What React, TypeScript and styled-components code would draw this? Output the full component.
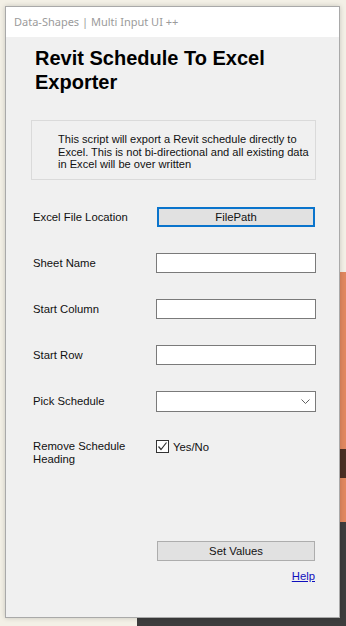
import React from 'react';
import styled, { createGlobalStyle } from 'styled-components';

const Global = createGlobalStyle`
  html, body {
    margin: 0;
    padding: 0;
  }
  body {
    width: 346px;
    height: 626px;
    overflow: hidden;
    font-family: "Liberation Sans", Arial, sans-serif;
  }
`;

const infoLines = [
  'This script will export a Revit schedule directly to',
  'Excel. This is not bi-directional and all existing data',
  'in Excel will be over written',
];

const rows = [
  { label: 'Sheet Name' },
  { label: 'Start Column' },
  { label: 'Start Row' },
];

const App = () => {
  return (
    <>
      <Global />
      <S.Desktop>
        <S.Window>
          <S.TitleBar>Data-Shapes | Multi Input UI ++</S.TitleBar>
          <S.Body>
            <S.Heading>Revit Schedule To Excel Exporter</S.Heading>
            <S.InfoBox>
              {infoLines.map((line) => (
                <S.InfoLine key={line}>{line}</S.InfoLine>
              ))}
            </S.InfoBox>
            <S.Form>
              <S.Row>
                <S.Label>Excel File Location</S.Label>
                <S.Button $focused>FilePath</S.Button>
              </S.Row>
              {rows.map((r) => (
                <S.Row key={r.label}>
                  <S.Label>{r.label}</S.Label>
                  <S.Input />
                </S.Row>
              ))}
              <S.Row>
                <S.Label>Pick Schedule</S.Label>
                <S.Combo>
                  <svg width="9" height="5" viewBox="0 0 9 5">
                    <polyline points="0.5,0.5 4.5,4.5 8.5,0.5" fill="none" stroke="#606060" strokeWidth="1" />
                  </svg>
                </S.Combo>
              </S.Row>
              <S.CheckRow>
                <S.Label>
                  Remove Schedule
                  <br />
                  Heading
                </S.Label>
                <S.CheckWrap>
                  <S.CheckBox>
                    <svg width="11" height="11" viewBox="0 0 11 11">
                      <polyline points="1.5,5.5 4,8.5 9.5,1.5" fill="none" stroke="#333" strokeWidth="1.2" />
                    </svg>
                  </S.CheckBox>
                  <span>Yes/No</span>
                </S.CheckWrap>
              </S.CheckRow>
            </S.Form>
            <S.Footer>
              <S.Button>Set Values</S.Button>
              <S.Help href="#">Help</S.Help>
            </S.Footer>
          </S.Body>
        </S.Window>
      </S.Desktop>
    </>
  );
};

const S = {
  Desktop: styled.div`
    width: 346px;
    height: 626px;
    padding: 6px 0 0 5px;
    box-sizing: border-box;
    background:
      linear-gradient(#3d3d3d, #3d3d3d) 137px 618px / 209px 8px no-repeat,
      linear-gradient(
          to bottom,
          transparent 0 272px,
          #e1885f 272px 449px,
          #4b2f23 449px 478px,
          #e1885f 478px 522px,
          #3d3d3d 522px
        )
        340px 0 / 6px 626px no-repeat,
      #f3f0e6;
  `,
  Window: styled.div`
    width: 335px;
    height: 612px;
    box-sizing: border-box;
    border: 1px solid #a9a9a9;
    background: #f0f0f0;
    display: flex;
    flex-direction: column;
    box-shadow: 0 0 5px rgba(0, 0, 0, 0.18);
  `,
  TitleBar: styled.div`
    height: 30px;
    background: #ffffff;
    color: #9b9b9b;
    font-family: "Noto Sans", "Open Sans", sans-serif;
    font-size: 11px;
    line-height: 30px;
    padding-left: 8px;
  `,
  Body: styled.div`
    flex: 1;
    display: flex;
    flex-direction: column;
    color: #000;
    font-size: 11px;
  `,
  Heading: styled.h1`
    margin: 9px 0 0 29px;
    width: 270px;
    font-size: 20px;
    line-height: 24px;
    font-weight: 700;
  `,
  InfoBox: styled.div`
    margin: 26px 0 0 25px;
    width: 285px;
    height: 60px;
    box-sizing: border-box;
    border: 1px solid #dadada;
    padding: 12px 0 0 26px;
    font-size: 11.1px;
    line-height: 12.5px;
    color: #111;
  `,
  InfoLine: styled.div`
    white-space: nowrap;
  `,
  Form: styled.div`
    margin: 14px 0 0 27px;
    display: flex;
    flex-direction: column;
  `,
  Row: styled.div`
    display: grid;
    grid-template-columns: 123px 160px;
    align-items: center;
    height: 46px;
  `,
  CheckRow: styled.div`
    display: grid;
    grid-template-columns: 123px 160px;
    align-items: start;
    padding-top: 16px;
  `,
  Label: styled.div`
    font-size: 11.3px;
    line-height: 13px;
    color: #111;
  `,
  Button: styled.div<{ $focused?: boolean }>`
    width: 158px;
    height: 20px;
    margin-left: 1px;
    box-sizing: border-box;
    border: ${({ $focused }) => ($focused ? '2px solid #0a74cc' : '1px solid #adadad')};
    background: #e1e1e1;
    display: flex;
    align-items: center;
    justify-content: center;
    font-size: 11.3px;
    color: #111;
  `,
  Input: styled.div`
    width: 160px;
    height: 20px;
    box-sizing: border-box;
    border: 1px solid #7a7a7a;
    background: #fff;
  `,
  Combo: styled.div`
    width: 160px;
    height: 21px;
    box-sizing: border-box;
    border: 1px solid #7a7a7a;
    background: #fff;
    display: flex;
    align-items: center;
    justify-content: flex-end;
    padding-right: 5px;
  `,
  CheckWrap: styled.div`
    display: flex;
    align-items: center;
    gap: 4px;
    font-size: 11.3px;
    color: #111;
  `,
  CheckBox: styled.div`
    width: 13px;
    height: 13px;
    box-sizing: border-box;
    border: 1px solid #333;
    background: #fff;
    display: flex;
    align-items: center;
    justify-content: center;
  `,
  Footer: styled.div`
    margin: auto 0 0 0;
    padding: 0 0 35px 149px;
    display: flex;
    flex-direction: column;
    align-items: flex-end;
    width: 160px;
    gap: 9px;
  `,
  Help: styled.a`
    color: #0f0fbd;
    text-decoration: underline;
    font-size: 11.3px;
  `,
};

export default App;
